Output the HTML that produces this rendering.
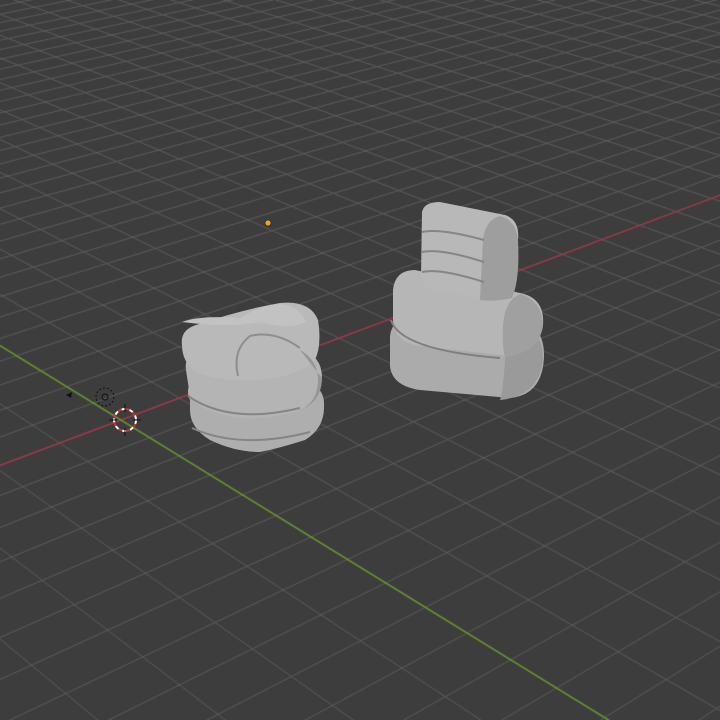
<!DOCTYPE html>
<html><head><meta charset="utf-8"><style>
html,body{margin:0;padding:0;background:#3d3d3d;width:720px;height:720px;overflow:hidden}
canvas,svg{position:absolute;left:0;top:0}
</style></head><body>
<canvas id="c" width="720" height="720"></canvas>
<svg width="720" height="720" viewBox="0 0 720 720">
<circle cx="268" cy="223" r="3" fill="#f0a030" stroke="#222" stroke-width="0.6"/>
<circle cx="125" cy="420" r="11" fill="none" stroke="#fff" stroke-width="2" stroke-dasharray="4 4"/>
<circle cx="125" cy="420" r="11" fill="none" stroke="#d03030" stroke-width="2" stroke-dasharray="4 4" stroke-dashoffset="4"/>
<path d="M125 404v8M125 428v8M109 420h8M133 420h8" stroke="#111" stroke-width="1"/>
<circle cx="105" cy="397" r="9" fill="none" stroke="#111" stroke-width="1" stroke-dasharray="2 2"/>
<circle cx="105" cy="397" r="3" fill="none" stroke="#111" stroke-width="1"/>
<path d="M66 395l6-3l-1 6z" fill="#111"/>
<path d="M390 336 Q392 318 412 318 L520 322 Q545 326 544 358 Q542 395 510 398 L420 390 Q392 386 390 366Z" fill="#ababab"/>
<path d="M500 400 Q540 396 543 358 Q542 330 522 325 Q508 330 505 360 Q503 392 500 400Z" fill="#9a9a9a"/>
<path d="M393 290 Q395 270 415 270 L520 293 Q545 298 543 325 Q540 350 510 356 L420 346 Q394 342 393 320Z" fill="#b6b6b6"/>
<path d="M505 357 Q540 352 543 325 Q542 300 520 294 Q505 300 503 325 Q502 348 505 357Z" fill="#a0a0a0"/>
<path d="M391 320 Q400 350 500 358" fill="none" stroke="#7e7e7e" stroke-width="2"/>
<path d="M422 212 Q424 202 440 202 L505 215 Q520 220 518 240 L515 286 Q512 300 495 300 L440 292 Q421 288 421 276Z" fill="#b8b8b8"/>
<path d="M480 300 Q495 302 512 298 Q520 280 518 240 Q516 220 500 216 Q485 220 483 240Z" fill="#9e9e9e"/>
<path d="M422 232 Q440 228 484 240 M422 252 Q440 248 484 262 M422 272 Q440 268 484 282" fill="none" stroke="#858585" stroke-width="2"/>
<path d="M190 400 Q185 390 192 380 L300 380 Q325 385 324 405 Q325 428 305 440 Q280 448 260 452 Q235 452 210 440 Q190 428 190 410Z" fill="#aeaeae"/>
<path d="M186 370 Q184 356 196 352 L300 350 Q322 355 322 378 Q320 398 300 410 Q270 420 240 418 Q200 412 190 396Z" fill="#b4b4b4"/>
<path d="M182 345 Q180 330 196 325 Q240 310 280 303 Q310 300 318 320 Q322 345 315 360 Q300 375 262 380 Q220 382 196 372 Q182 362 182 345Z" fill="#b9b9b9"/>
<path d="M182 322 Q200 315 240 318 Q260 305 280 304 Q300 306 306 322 Q290 330 260 322 Q230 328 182 322Z" fill="#c2c2c2"/>
<path d="M238 376 Q232 350 250 336 Q275 330 300 348" fill="none" stroke="#8e8e8e" stroke-width="2"/>
<path d="M188 396 Q230 425 300 408 M192 428 Q240 450 310 432" fill="none" stroke="#858585" stroke-width="2"/>
<path d="M300 350 Q318 360 318 380 Q318 400 302 410 Q322 400 322 378Z" fill="#969696"/>
</svg>
<script>
var c=document.getElementById('c').getContext('2d');
c.fillStyle='#3d3d3d';c.fillRect(0,0,720,720);
var O=[121,420],VR=[2573,-500],VG=[-1374,-500],p=0.0244,q=0.0188;
var A=[p*VR[0],p*VR[1]],B=[q*VG[0],q*VG[1]];
function P(i,j){var d=1+i*p+j*q;return [(O[0]+i*A[0]+j*B[0])/d,(O[1]+i*A[1]+j*B[1])/d];}
function ln(a,b,col){c.strokeStyle=col;c.beginPath();c.moveTo(a[0],a[1]);c.lineTo(b[0],b[1]);c.stroke();}
var col='rgba(95,95,95,0.9)';
c.lineWidth=1;
for(var i=-300;i<=500;i++){ if(i==0)continue; var j0=(-(1+i*p))/q+0.05; ln(P(i,j0),P(i,j0+20000),col);}
for(var j=-300;j<=500;j++){ if(j==0)continue; var i0=(-(1+j*q))/p+0.05; ln(P(i0,j),P(i0+20000,j),col);}
c.lineWidth=1.5;
ln(P(-1/p+0.05,0),P(30000,0),'#a03a48');
ln(P(0,-1/q+0.05),P(0,30000),'#6c9a2c');
</script>
</body></html>
